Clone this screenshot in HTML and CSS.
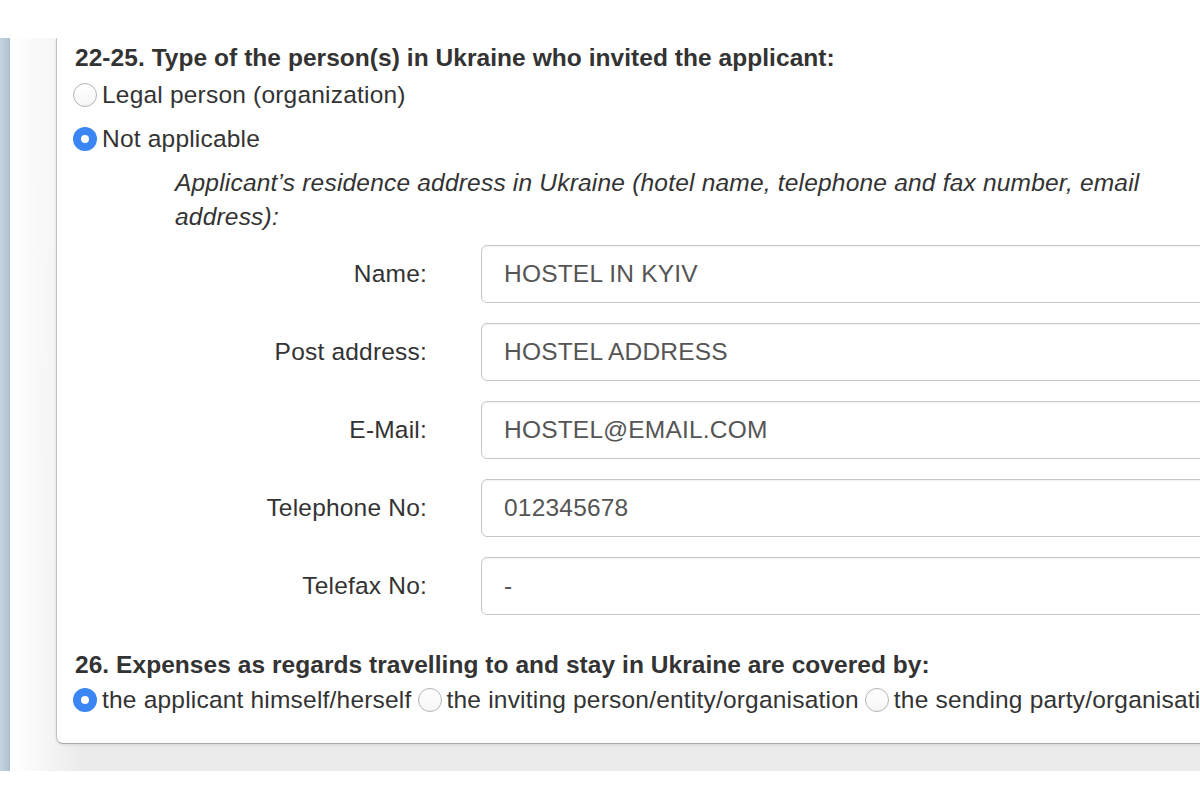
FILE: index.html
```html
<!DOCTYPE html>
<html lang="en">
<head>
<meta charset="utf-8">
<title>Visa application form</title>
<link rel="stylesheet" href="styles.css">
</head>
<body>
<div class="page">
  <div class="rail"></div>
  <div class="main">
    <div class="panel">
      <div class="heading">22-25. Type of the person(s) in Ukraine who invited the applicant:</div>
      <div class="radio-row"><span class="radio"></span><span class="radio-label">Legal person (organization)</span></div>
      <div class="radio-row second"><span class="radio checked"></span><span class="radio-label">Not applicable</span></div>
      <div class="sub">
        <p class="note">Applicant’s residence address in Ukraine (hotel name, telephone and fax number, email address):</p>
        <div class="fields">
          <div class="label">Name:</div><div class="input">HOSTEL IN KYIV</div>
          <div class="label">Post address:</div><div class="input">HOSTEL ADDRESS</div>
          <div class="label">E-Mail:</div><div class="input">HOSTEL@EMAIL.COM</div>
          <div class="label">Telephone No:</div><div class="input">012345678</div>
          <div class="label">Telefax No:</div><div class="input">-</div>
        </div>
      </div>
      <div class="heading h26">26. Expenses as regards travelling to and stay in Ukraine are covered by:</div>
      <div class="inline-radios">
        <span class="radio checked"></span><span class="radio-label">the applicant himself/herself</span>
        <span class="radio"></span><span class="radio-label">the inviting person/entity/organisation</span>
        <span class="radio"></span><span class="radio-label">the sending party/organisation</span>
      </div>
    </div>
  </div>
</div>
</body>
</html>
```

FILE: styles.css
```css
html, body {
  margin: 0;
  padding: 0;
  background: #ffffff;
  overflow: hidden;
  width: 1200px;
  height: 800px;
}

body {
  font-family: "Liberation Sans", Arial, sans-serif;
  color: #333333;
  font-size: 24.5px;
  letter-spacing: 0.2px;
}

.page {
  margin-top: 38px;
  height: 733px;
  display: flex;
  overflow: hidden;
}

.rail {
  width: 10px;
  flex: none;
  background: linear-gradient(to right, #c4d4df 0, #b6c8d5 70%, #a9bccb 100%);
}

.main {
  flex: 1;
  min-width: 0;
  padding-left: 46px;
  background:
    linear-gradient(to right, #ffffff 0, #f9f9f9 25px, rgba(236,236,236,0) 70px),
    linear-gradient(to bottom, #f3f3f3 0, #ebebeb 100%);
  overflow: hidden;
}

.panel {
  width: 1300px;
  background: #ffffff;
  border: 1px solid #c2c2c2;
  border-top: 0;
  border-bottom-color: #a9a9a9;
  border-radius: 0 0 7px 7px;
  box-shadow: 0 1px 3px rgba(0,0,0,0.10);
  padding: 5px 0 26px 16px;
}

.heading {
  font-weight: bold;
  line-height: 30px;
  padding-left: 2px;
  letter-spacing: 0.05px;
}

.radio-row {
  display: flex;
  align-items: center;
  height: 34px;
  margin-top: 5px;
}

.radio-row.second {
  margin-top: 10px;
}

.radio {
  display: inline-block;
  box-sizing: border-box;
  width: 24px;
  height: 24px;
  border-radius: 50%;
  border: 1px solid #b3b3b3;
  background: linear-gradient(to bottom, #ffffff, #f6f6f6);
  flex: none;
  position: relative;
}

.radio.checked {
  border: 0;
  background: #3a86f4;
}

.radio.checked::after {
  content: "";
  position: absolute;
  left: 8px;
  top: 8px;
  width: 8px;
  height: 8px;
  border-radius: 50%;
  background: #ffffff;
}

.radio-label {
  margin-left: 5px;
  line-height: 34px;
}

.sub {
  margin-left: 102px;
  margin-top: 10px;
}

.note {
  margin: 0;
  font-style: italic;
  line-height: 34px;
  width: 980px;
}

.fields {
  display: grid;
  grid-template-columns: 252px 1fr;
  column-gap: 54px;
  row-gap: 20px;
  margin-top: 11px;
}

.label {
  text-align: right;
  height: 58px;
  line-height: 58px;
}

.input {
  box-sizing: border-box;
  height: 58px;
  line-height: 56px;
  border: 1px solid #c7c7c7;
  border-radius: 6px;
  padding-left: 22px;
  color: #555555;
  box-shadow: inset 0 1px 2px rgba(0,0,0,0.06);
}

.h26 {
  margin-top: 35px;
}

.inline-radios {
  display: flex;
  align-items: center;
  height: 34px;
  margin-top: 3px;
  white-space: nowrap;
}

.inline-radios .radio-label {
  margin-right: 6px;
}
```
